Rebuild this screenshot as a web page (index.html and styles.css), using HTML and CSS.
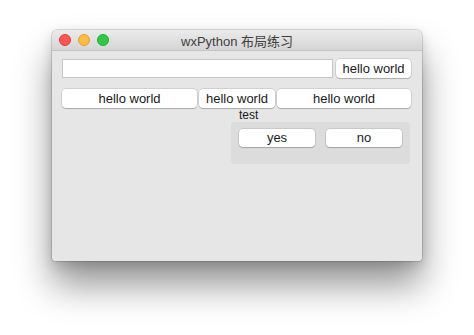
FILE: index.html
```html
<!DOCTYPE html>
<html lang="en">

<head>
    <meta charset="UTF-8">
    <meta name="viewport" content="width=device-width, initial-scale=1.0">
    <title>wxPython 布局练习</title>
    <link rel="stylesheet" href="styles.css">
</head>

<body>
    <div class="window">
        <div class="titlebar">
            <div class="lights">
                <span class="light red"></span>
                <span class="light yellow"></span>
                <span class="light green"></span>
            </div>
            <div class="title">wxPython 布局练习</div>
        </div>
        <div class="content">
            <div class="row row-1">
                <input class="field" type="text" value="">
                <button class="btn btn-side">hello world</button>
            </div>
            <div class="row row-2">
                <button class="btn btn-a">hello world</button>
                <button class="btn btn-b">hello world</button>
                <button class="btn btn-c">hello world</button>
            </div>
            <div class="group-wrap">
                <div class="group-label">test</div>
                <div class="group">
                    <button class="btn btn-yes">yes</button>
                    <button class="btn btn-no">no</button>
                </div>
            </div>
        </div>
    </div>
</body>

</html>
```

FILE: styles.css
```css
* {
    box-sizing: border-box;
}

html,
body {
    margin: 0;
    min-height: 335px;
}

body {
    background: #fff;
    padding-top: 30px;
    font-family: "Liberation Sans", Arial, "Noto Sans CJK SC", sans-serif;
    font-size: 13px;
    color: #1a1a1a;
}

.window {
    width: 370px;
    height: 231px;
    margin-left: 52px;
    background: #e6e6e6;
    border-radius: 5px 5px 3px 3px;
    box-shadow: 0 0 0 0.5px rgba(0, 0, 0, 0.25), 0 24px 36px rgba(0, 0, 0, 0.42), 0 4px 12px rgba(0, 0, 0, 0.15);
    overflow: hidden;
}

.titlebar {
    height: 21px;
    position: relative;
    background: linear-gradient(#ebebeb, #d5d5d5);
    border-bottom: 1px solid #c4c4c4;
    display: flex;
    align-items: center;
    justify-content: center;
}

.lights {
    position: absolute;
    left: 7px;
    top: 4px;
    display: flex;
    gap: 7px;
}

.light {
    width: 12px;
    height: 12px;
    border-radius: 50%;
}

.red {
    background: #fc5753;
    border: 0.5px solid #df3d39;
}

.yellow {
    background: #fdbc40;
    border: 0.5px solid #dea034;
}

.green {
    background: #33c748;
    border: 0.5px solid #27aa35;
}

.title {
    color: #3f3f3f;
    font-size: 13px;
    padding-top: 1px;
}

.content {
    padding: 8px 11px 0 10px;
}

.row {
    display: flex;
    height: 19px;
}

.row-1 {
    gap: 3px;
}

.row-2 {
    margin-top: 11px;
    gap: 2px;
}

.field {
    flex: 1;
    height: 19px;
    border: 1px solid #c6c6c6;
    background: #fff;
    outline: none;
    margin: 0;
}

.btn {
    height: 19px;
    padding: 0;
    margin: 0;
    border: none;
    border-radius: 4px;
    background: #fff;
    font: inherit;
    color: #1a1a1a;
    line-height: 19px;
    box-shadow: 0 0 0 0.5px rgba(0, 0, 0, 0.18), 0 1px 1px rgba(0, 0, 0, 0.18);
}

.btn-side {
    width: 75px;
}

.btn-a {
    width: 135px;
}

.btn-b {
    width: 76px;
}

.btn-c {
    flex: 1;
}

.group-wrap {
    margin-left: 169px;
    width: 179px;
}

.group-label {
    font-size: 12px;
    height: 14px;
    line-height: 14px;
    margin: 0 0 0 8px;
    color: #1a1a1a;
}

.group {
    height: 42px;
    background: #dcdcdc;
    border-radius: 4px;
    display: flex;
    gap: 11px;
    padding: 7px 7px 0 8px;
}

.btn-yes,
.btn-no {
    width: 76px;
    height: 18px;
    line-height: 18px;
}
```
